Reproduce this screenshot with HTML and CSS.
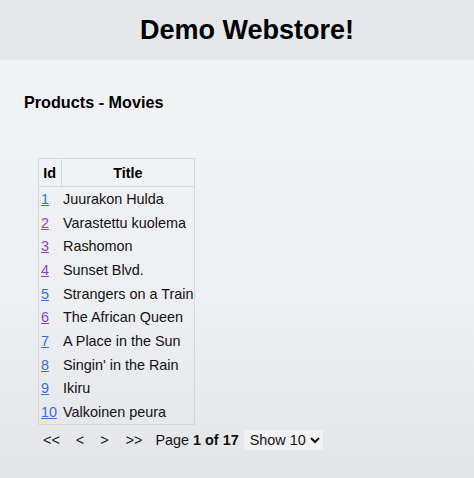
FILE: index.html
```html
<!DOCTYPE html>
<html>
<head>
<meta charset="utf-8">
<title>Demo Webstore</title>
<link rel="stylesheet" href="styles.css">
</head>
<body>
<header class="site-header">
  <h1 class="site-title">Demo Webstore!</h1>
</header>
<main class="content">
  <h2 class="section-title">Products - Movies</h2>
  <table class="products">
    <thead>
      <tr><th class="col-id">Id</th><th class="col-title">Title</th></tr>
    </thead>
    <tbody>
      <tr><td><a class="link" href="#">1</a></td><td>Juurakon Hulda</td></tr>
      <tr><td><a class="link visited" href="#">2</a></td><td>Varastettu kuolema</td></tr>
      <tr><td><a class="link visited" href="#">3</a></td><td>Rashomon</td></tr>
      <tr><td><a class="link visited" href="#">4</a></td><td>Sunset Blvd.</td></tr>
      <tr><td><a class="link" href="#">5</a></td><td>Strangers on a Train</td></tr>
      <tr><td><a class="link visited" href="#">6</a></td><td>The African Queen</td></tr>
      <tr><td><a class="link" href="#">7</a></td><td>A Place in the Sun</td></tr>
      <tr><td><a class="link" href="#">8</a></td><td>Singin' in the Rain</td></tr>
      <tr><td><a class="link" href="#">9</a></td><td>Ikiru</td></tr>
      <tr><td><a class="link" href="#">10</a></td><td>Valkoinen peura</td></tr>
    </tbody>
  </table>
  <div class="pager">
    <button class="pager-btn">&lt;&lt;</button>
    <button class="pager-btn">&lt;</button>
    <button class="pager-btn">&gt;</button>
    <button class="pager-btn">&gt;&gt;</button>
    <span class="pager-info">Page <strong>1 of 17</strong></span>
    <select class="pager-size">
      <option selected>Show 10</option>
      <option>Show 20</option>
      <option>Show 30</option>
    </select>
  </div>
</main>
</body>
</html>
```
FILE: styles.css
```css
html, body {
  margin: 0;
  padding: 0;
}
body {
  font-family: "Liberation Sans", Arial, sans-serif;
  font-size: 14.4px;
  color: #111;
  min-height: 478px;
  background: linear-gradient(#f1f2f4 60px, #eeeff2 300px, #e4e5e9 478px);
}
.site-header {
  height: 60px;
  background: #e6e7ea;
  display: flex;
  align-items: center;
  justify-content: center;
  padding-left: 20px;
}
.site-title {
  margin: 0;
  font-size: 27px;
  font-weight: bold;
  color: #000;
}
.content {
  padding: 0 24px;
}
.section-title {
  margin: 0;
  padding-top: 33px;
  font-size: 16.2px;
  font-weight: bold;
  color: #000;
  line-height: 19px;
}
.products {
  margin: 46px 0 0 14px;
  border-collapse: collapse;
  border: 1px solid #d6d7db;
}
.products th {
  font-weight: bold;
  color: #000;
  height: 27px;
  padding: 0 3px;
  border: 1px solid #d6d7db;
  background: #f1f2f4;
}
.products td {
  padding: 0 1px 0 2px;
  height: 23.7px;
  white-space: nowrap;
}
.products td:first-child {
  padding-left: 2px;
  padding-right: 4px;
}
.link {
  color: #3b6fd9;
}
.link.visited {
  color: #8944c8;
}
.pager {
  margin: 5px 0 0 13px;
  display: flex;
  align-items: center;
  gap: 4px;
}
.pager-btn {
  font-family: inherit;
  font-size: 14.4px;
  background: transparent;
  border: none;
  padding: 1px 6px;
  color: #111;
}
.pager-btn:nth-child(4) {
  margin-left: 1px;
}
.pager-info {
  margin-left: 3px;
}
.pager-size {
  font-family: inherit;
  font-size: 14.4px;
  border: none;
  background: #f1f2f4;
  color: #111;
  padding: 1px 0 1px 2px;
  margin-left: 1px;
}
```
